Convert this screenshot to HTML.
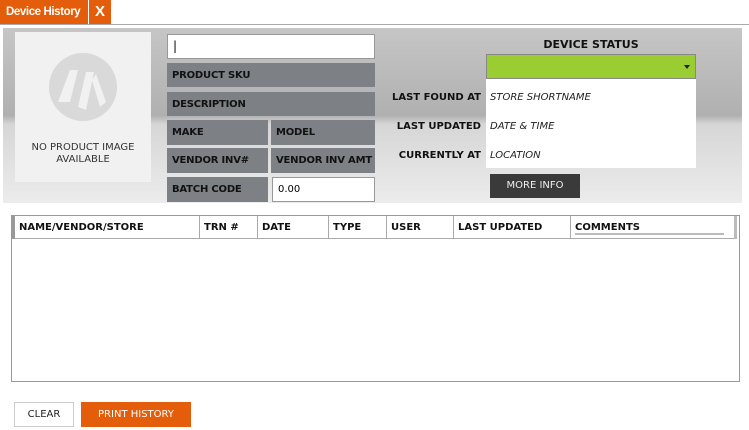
<!DOCTYPE html><html><head><style>
*{margin:0;padding:0;box-sizing:border-box}
body{width:749px;height:430px;background:#fff;font-family:"DejaVu Sans","Liberation Sans",sans-serif;position:relative;overflow:hidden;font-size:10px}
.a{position:absolute}
.g{background:#7d8084;color:#111;font-weight:bold;font-size:10px;padding-left:5px;display:flex;align-items:center;letter-spacing:-0.2px;white-space:nowrap}
.lab{font-weight:bold;font-size:10px;color:#111;text-align:right;width:110px;left:371px}
.it{font-style:italic;font-size:10px;color:#222;left:490px}
th{font-weight:bold;font-size:10px;text-align:left;padding-left:4px;border-right:1px solid #aaa;height:22px;color:#111;padding-top:2px}
</style></head><body>
<div class="a" style="left:0;top:0;width:88px;height:24px;background:#e35d0a;color:#fff;font-weight:bold;font-size:11.5px;line-height:24px;padding-left:6px;white-space:nowrap;letter-spacing:-0.4px;font-family:'Liberation Sans',sans-serif">Device History</div>
<div class="a" style="left:89px;top:0;width:22px;height:24px;background:#e35d0a;color:#fff;font-weight:bold;font-size:15px;line-height:24px;text-align:center;font-family:'Liberation Sans',sans-serif">X</div>
<div class="a" style="left:0;top:24px;width:749px;height:1px;background:#aaa"></div>
<div class="a" style="left:3px;top:28px;width:739px;height:175px;background:linear-gradient(#c6c6c6 0%,#b0b0b0 50%,#d6d6d6 55%,#ececec 100%)"></div>
<div class="a" style="left:15px;top:32px;width:136px;height:150px;background:#f1f1f1"></div>
<svg class="a" style="left:48px;top:52px" width="70" height="70" viewBox="0 0 70 70"><circle cx="35" cy="35" r="34" fill="#d9d9d9"/><path d="M10 50 L22 18 L30 18 L22 50Z M30 55 L38 20 L46 20 L38 58Z M48 22 L58 50 L52 55 L44 28Z" fill="#f1f1f1"/></svg>
<div class="a" style="left:15px;top:142px;width:136px;text-align:center;font-size:10px;color:#333;line-height:12px">NO PRODUCT IMAGE<br>AVAILABLE</div>
<div class="a" style="left:167px;top:34px;width:208px;height:25px;background:#fff;border:1px solid #999;padding:4px 5px;font-size:12px">|</div>
<div class="a g" style="left:167px;top:63px;width:208px;height:24px">PRODUCT SKU</div>
<div class="a g" style="left:167px;top:92px;width:208px;height:24px">DESCRIPTION</div>
<div class="a g" style="left:167px;top:120px;width:101px;height:25px">MAKE</div>
<div class="a g" style="left:271px;top:120px;width:104px;height:25px">MODEL</div>
<div class="a g" style="left:167px;top:148px;width:101px;height:25px">VENDOR INV#</div>
<div class="a g" style="left:271px;top:148px;width:104px;height:25px">VENDOR INV AMT</div>
<div class="a g" style="left:167px;top:177px;width:101px;height:25px">BATCH CODE</div>
<div class="a" style="left:272px;top:177px;width:103px;height:25px;background:#fff;border:1px solid #999;padding:6px 5px;font-size:10px">0.00</div>
<div class="a" style="left:486px;top:38px;width:210px;text-align:center;font-weight:bold;font-size:11px;color:#111">DEVICE STATUS</div>
<div class="a" style="left:486px;top:54px;width:210px;height:25px;background:#9acd32;border:1px solid #888"><div class="a" style="right:5px;top:10px;border:3px solid transparent;border-top:4px solid #222"></div></div>
<div class="a" style="left:486px;top:79px;width:210px;height:89px;background:#fff"></div>
<div class="a lab" style="top:92px">LAST FOUND AT</div>
<div class="a lab" style="top:121px">LAST UPDATED</div>
<div class="a lab" style="top:150px">CURRENTLY AT</div>
<div class="a it" style="top:92px">STORE SHORTNAME</div>
<div class="a it" style="top:121px">DATE &amp; TIME</div>
<div class="a it" style="top:150px">LOCATION</div>
<div class="a" style="left:490px;top:174px;width:90px;height:24px;background:#3a3a3a;color:#eee;font-size:10px;line-height:24px;text-align:center">MORE INFO</div>
<div class="a" style="left:11px;top:215px;width:729px;height:167px;border:1px solid #999"></div>
<table class="a" style="left:12px;top:216px;width:725px;border-collapse:collapse;border-left:3px solid #999;border-bottom:1px solid #aaa"><tr>
<th style="width:186px">NAME/VENDOR/STORE</th><th style="width:58px">TRN #</th><th style="width:71px">DATE</th><th style="width:58px">TYPE</th><th style="width:67px">USER</th><th style="width:117px">LAST UPDATED</th><th style="border-right:3px solid #bbb"><span style="border-bottom:2px solid #bbb">COMMENTS&nbsp;&nbsp;&nbsp;&nbsp;&nbsp;&nbsp;&nbsp;&nbsp;&nbsp;&nbsp;&nbsp;&nbsp;&nbsp;&nbsp;&nbsp;&nbsp;&nbsp;&nbsp;&nbsp;&nbsp;&nbsp;&nbsp;&nbsp;&nbsp;</span></th></tr></table>
<div class="a" style="left:14px;top:402px;width:60px;height:25px;border:1px solid #ccc;background:#fff;font-size:10px;line-height:23px;text-align:center;color:#222">CLEAR</div>
<div class="a" style="left:81px;top:402px;width:110px;height:25px;background:#e35d0a;color:#fff;font-size:10px;line-height:25px;text-align:center">PRINT HISTORY</div>
</body></html>
